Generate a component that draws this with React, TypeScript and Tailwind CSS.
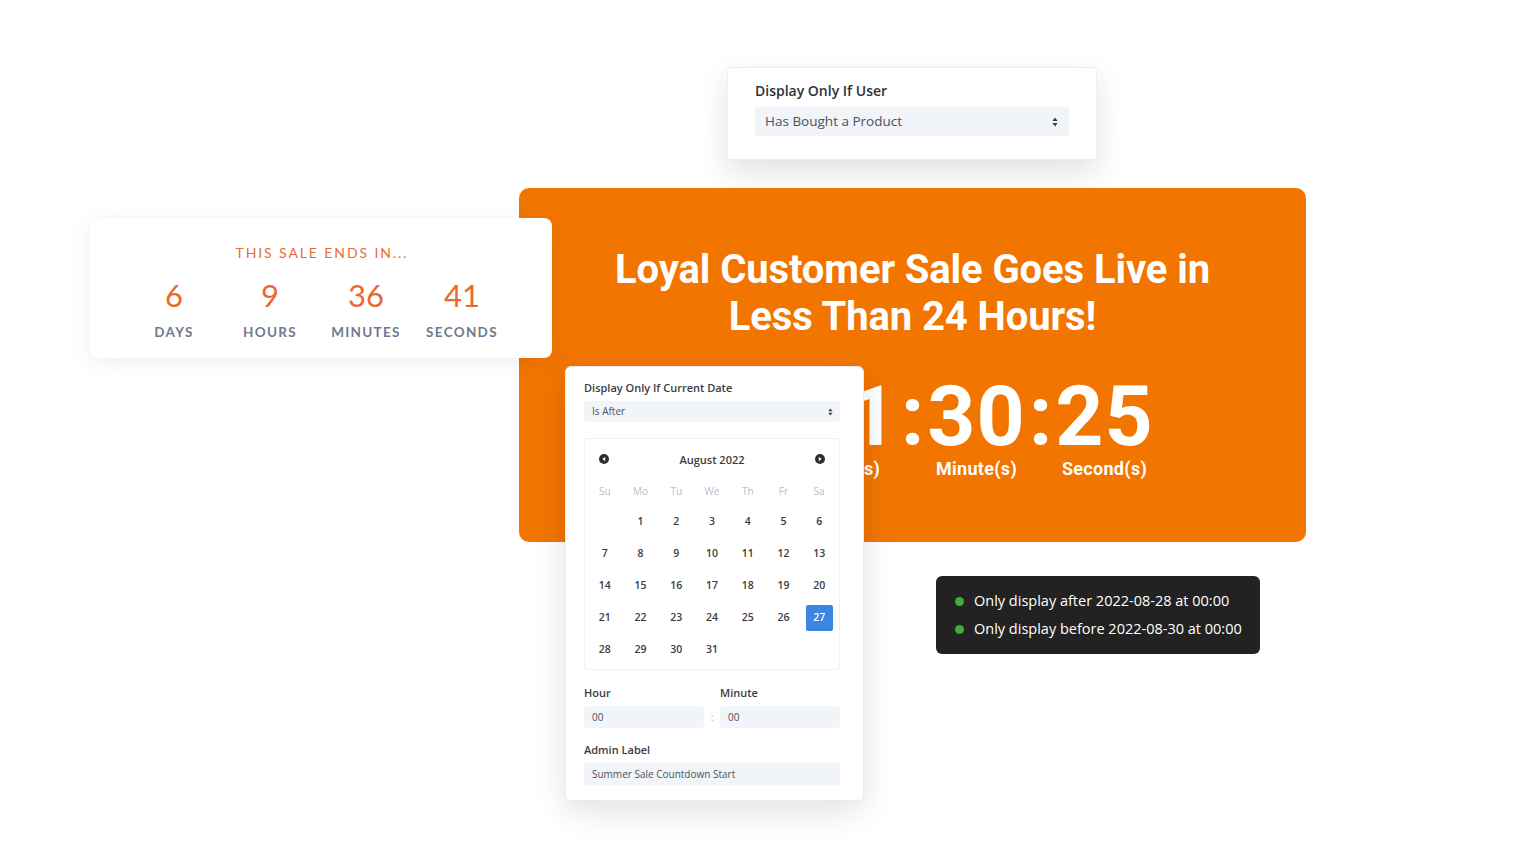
import React from 'react';

const openSans = { fontFamily: '"Open Sans", "Noto Sans", sans-serif' };

const SelectArrows: React.FC<{ size?: number }> = ({ size = 10 }) => (
  <svg width={size * 0.6} height={size} viewBox="0 0 6 10" fill="#3a3f47">
    <path d="M3 0.5 L5.6 4 H0.4 Z" />
    <path d="M3 9.5 L5.6 6 H0.4 Z" />
  </svg>
);

const NavArrow: React.FC<{ dir: 'left' | 'right' }> = ({ dir }) => (
  <svg width="10" height="10" viewBox="0 0 10 10">
    <circle cx="5" cy="5" r="5" fill="#2f2f2f" />
    {dir === 'left' ? (
      <path d="M6.2 2.8 L3.4 5 L6.2 7.2 Z" fill="#fff" />
    ) : (
      <path d="M3.8 2.8 L6.6 5 L3.8 7.2 Z" fill="#fff" />
    )}
  </svg>
);

const weekDays = ['Su', 'Mo', 'Tu', 'We', 'Th', 'Fr', 'Sa'];
// August 2022 starts on a Monday
const days: (number | null)[] = [null, ...Array.from({ length: 31 }, (_, i) => i + 1)];

const saleUnits = [
  { value: '6', label: 'DAYS' },
  { value: '9', label: 'HOURS' },
  { value: '36', label: 'MINUTES' },
  { value: '41', label: 'SECONDS' },
];

const bigUnits = [
  { value: '00', label: 'Day(s)' },
  { value: '01', label: 'Hour(s)' },
  { value: '30', label: 'Minute(s)' },
  { value: '25', label: 'Second(s)' },
];

const App: React.FC = () => {
  return (
    <div className="relative w-[1536px] h-[858px] bg-white overflow-hidden">
      {/* user condition card */}
      <div
        className="absolute left-[727px] top-[67px] w-[370px] bg-white rounded-[4px] border border-[#eeeeee] shadow-[0_12px_32px_rgba(0,0,0,0.12)] px-[27px] pt-[13px] pb-[23px]"
        style={openSans}
      >
        <div className="text-[14px] leading-[20px] font-semibold text-[#2f3237]">Display Only If User</div>
        <div className="mt-[6px] h-[29px] bg-[#f1f4f8] rounded-[2px] flex items-center justify-between pl-[10px] pr-[11px]">
          <span className="text-[13.5px] text-[#4a5261]">Has Bought a Product</span>
          <SelectArrows />
        </div>
      </div>

      {/* orange banner */}
      <div
        className="absolute left-[519px] top-[188px] w-[787px] h-[354px] bg-[#f27500] rounded-[10px] flex flex-col items-center pt-[58px]"
        style={{ fontFamily: 'Roboto, "Liberation Sans", sans-serif' }}
      >
        <h1 className="text-white text-[40px] leading-[47px] font-bold text-center tracking-[-0.1px]">
          Loyal Customer Sale Goes Live in
          <br />
          Less Than 24 Hours!
        </h1>
        <div className="flex mt-[35px]">
          {bigUnits.map((u, i) => (
            <React.Fragment key={u.label}>
              {i > 0 && (
                <div className="w-[24px] text-center text-white text-[84px] leading-[84px] font-bold">:</div>
              )}
              <div className="w-[104px] flex flex-col items-center">
                <div className="text-white text-[84px] leading-[84px] font-bold tracking-[1px]">{u.value}</div>
                <div className="text-white text-[18px] leading-[20px] font-bold tracking-[0.3px]">{u.label}</div>
              </div>
            </React.Fragment>
          ))}
        </div>
      </div>

      {/* sale countdown card */}
      <div
        className="absolute left-[90px] top-[218px] w-[462px] h-[140px] bg-white rounded-[8px] shadow-[0_4px_24px_rgba(0,0,0,0.07)] pt-[25px] flex flex-col items-center"
        style={{ fontFamily: 'Lato, "Open Sans", sans-serif' }}
      >
        <div className="text-[14px] leading-[20px] tracking-[1.9px] text-[#ea6c35] pl-[2px]">THIS SALE ENDS IN...</div>
        <div className="flex mt-[14px] pr-[6px]">
          {saleUnits.map((u) => (
            <div key={u.label} className="w-[96px] flex flex-col items-center">
              <div className="text-[31px] leading-[36px] text-[#ea6a2d]">{u.value}</div>
              <div className="mt-[9px] text-[13.5px] leading-[20px] font-bold tracking-[1.3px] text-[#6e7b8c]">
                {u.label}
              </div>
            </div>
          ))}
        </div>
      </div>

      {/* date condition card */}
      <div
        className="absolute left-[565px] top-[366px] w-[299px] bg-white rounded-[6px] border border-[#ececec] shadow-[0_10px_32px_rgba(0,0,0,0.12)] pl-[18px] pr-[23px] pt-[13px] pb-[15px]"
        style={openSans}
      >
        <div className="text-[11px] leading-[16px] font-semibold text-[#3a3d42]">Display Only If Current Date</div>
        <div className="mt-[5px] h-[21px] bg-[#f1f4f8] rounded-[2px] flex items-center justify-between pl-[8px] pr-[7px]">
          <span className="text-[10px] text-[#4a5261]">Is After</span>
          <SelectArrows size={8} />
        </div>

        <div className="mt-[16px] border border-[#f1f1f1] rounded-[2px] pt-[9px] pb-[3px] px-[2px]">
          <div className="h-[22px] flex items-center justify-between px-[12px]">
            <NavArrow dir="left" />
            <span className="text-[11px] leading-[16px] font-semibold text-[#3a3d42] mt-[2px]">August 2022</span>
            <NavArrow dir="right" />
          </div>
          <div className="grid grid-cols-7 mt-[9px] h-[24px] items-center">
            {weekDays.map((d) => (
              <div key={d} className="text-center text-[10px] leading-[14px] text-[#b8c0cb]">
                {d}
              </div>
            ))}
          </div>
          <div className="grid grid-cols-7 mt-[3px]">
            {days.map((d, i) => (
              <div key={i} className="h-[32px] flex items-center justify-center">
                {d !== null &&
                  (d === 27 ? (
                    <div className="w-[27px] h-[26px] rounded-[2px] bg-[#3b86e0] text-white text-[10.5px] font-semibold flex items-center justify-center">
                      {d}
                    </div>
                  ) : (
                    <span className="text-[10.5px] font-semibold text-[#3a3d42]">{d}</span>
                  ))}
              </div>
            ))}
          </div>
        </div>

        <div className="mt-[15px] grid grid-cols-[120px_16px_120px]">
          <div className="text-[11px] leading-[16px] font-semibold text-[#3a3d42]">Hour</div>
          <div />
          <div className="text-[11px] leading-[16px] font-semibold text-[#3a3d42]">Minute</div>
          <div className="mt-[5px] h-[22px] bg-[#f1f4f8] rounded-[2px] flex items-center pl-[8px] text-[10px] text-[#4a5261]">
            00
          </div>
          <div className="mt-[5px] h-[22px] flex items-center justify-center text-[10px] text-[#a0a8b3]">:</div>
          <div className="mt-[5px] h-[22px] bg-[#f1f4f8] rounded-[2px] flex items-center pl-[8px] text-[10px] text-[#4a5261]">
            00
          </div>
        </div>

        <div className="mt-[14px] text-[11px] leading-[16px] font-semibold text-[#3a3d42]">Admin Label</div>
        <div className="mt-[5px] h-[22px] bg-[#f1f4f8] rounded-[2px] flex items-center pl-[8px] text-[10px] text-[#4a5261]">
          Summer Sale Countdown Start
        </div>
      </div>

      {/* condition summary tooltip */}
      <div
        className="absolute left-[936px] top-[576px] w-[324px] h-[78px] bg-[#222222] rounded-[6px] pl-[19px] pt-[11px]"
        style={openSans}
      >
        {['Only display after 2022-08-28 at 00:00', 'Only display before 2022-08-30 at 00:00'].map((t) => (
          <div key={t} className="h-[28px] flex items-center gap-[10px]">
            <span className="w-[9px] h-[9px] rounded-full bg-[#3dae3a]" />
            <span className="text-[14.5px] text-white">{t}</span>
          </div>
        ))}
      </div>
    </div>
  );
};

export default App;
